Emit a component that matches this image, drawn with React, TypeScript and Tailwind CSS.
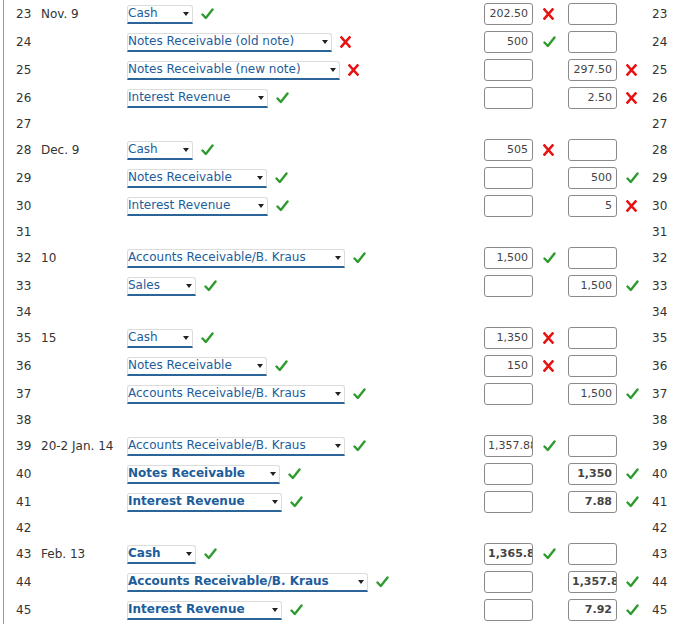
import React from "react";

type Mark = "ok" | "no" | null;

interface Row {
  n: number;
  date?: string;
  account?: string;
  w?: number;
  mark?: Mark;
  bold?: boolean;
  debit?: string;
  dm?: Mark;
  credit?: string;
  cm?: Mark;
  clip?: boolean;
}

const rows: Row[] = [
  { n: 23, date: "Nov. 9", account: "Cash", w: 66, mark: "ok", debit: "202.50", dm: "no" },
  { n: 24, account: "Notes Receivable (old note)", w: 205, mark: "no", debit: "500", dm: "ok" },
  { n: 25, account: "Notes Receivable (new note)", w: 213, mark: "no", credit: "297.50", cm: "no" },
  { n: 26, account: "Interest Revenue", w: 141, mark: "ok", credit: "2.50", cm: "no" },
  { n: 27 },
  { n: 28, date: "Dec. 9", account: "Cash", w: 66, mark: "ok", debit: "505", dm: "no" },
  { n: 29, account: "Notes Receivable", w: 140, mark: "ok", credit: "500", cm: "ok" },
  { n: 30, account: "Interest Revenue", w: 141, mark: "ok", credit: "5", cm: "no" },
  { n: 31 },
  { n: 32, date: "10", account: "Accounts Receivable/B. Kraus", w: 218, mark: "ok", debit: "1,500", dm: "ok" },
  { n: 33, account: "Sales", w: 69, mark: "ok", credit: "1,500", cm: "ok" },
  { n: 34 },
  { n: 35, date: "15", account: "Cash", w: 66, mark: "ok", debit: "1,350", dm: "no" },
  { n: 36, account: "Notes Receivable", w: 140, mark: "ok", debit: "150", dm: "no" },
  { n: 37, account: "Accounts Receivable/B. Kraus", w: 218, mark: "ok", credit: "1,500", cm: "ok" },
  { n: 38 },
  { n: 39, date: "20-2 Jan. 14", account: "Accounts Receivable/B. Kraus", w: 218, mark: "ok", debit: "1,357.88", dm: "ok", clip: true },
  { n: 40, account: "Notes Receivable", w: 153, mark: "ok", bold: true, credit: "1,350", cm: "ok" },
  { n: 41, account: "Interest Revenue", w: 155, mark: "ok", bold: true, credit: "7.88", cm: "ok" },
  { n: 42 },
  { n: 43, date: "Feb. 13", account: "Cash", w: 69, mark: "ok", bold: true, debit: "1,365.80", dm: "ok", clip: true },
  { n: 44, account: "Accounts Receivable/B. Kraus", w: 241, mark: "ok", bold: true, credit: "1,357.88", cm: "ok", clip: true },
  { n: 45, account: "Interest Revenue", w: 155, mark: "ok", bold: true, credit: "7.92", cm: "ok" },
];

const Check = () => (
  <svg width="13" height="12" viewBox="0 0 13 12">
    <path d="M1.5 6.5 L4.8 10 L11.5 1.5" fill="none" stroke="#2f9a2f" strokeWidth="2.4" strokeLinecap="round" strokeLinejoin="round" />
  </svg>
);

const Cross = () => (
  <svg width="11" height="12" viewBox="0 0 11 12">
    <path d="M1.5 1.5 L9.5 10.5 M9.5 1.5 L1.5 10.5" fill="none" stroke="#e81010" strokeWidth="2.6" strokeLinecap="square" />
  </svg>
);

const MarkIcon = ({ m }: { m?: Mark }) =>
  m === "ok" ? <Check /> : m === "no" ? <Cross /> : null;

const Box = ({ value, bold, clip }: { value?: string; bold?: boolean; clip?: boolean }) => (
  <div
    className={`w-[49px] h-[22px] border border-[#8a8a8a] rounded-[3px] bg-white overflow-hidden whitespace-nowrap text-[11px] leading-[20px] text-[#444] px-[4px] ${
      clip ? "text-left pl-[3px]" : "text-right"
    } ${bold ? "font-bold text-[#222]" : ""}`}
  >
    {value ?? ""}
  </div>
);

const Select = ({ label, w, bold }: { label: string; w: number; bold?: boolean }) => (
  <div
    style={{ width: w }}
    className={`relative h-[19px] border border-[#dcdcdc] border-b-2 border-b-[#2a6498] rounded-t-[3px] text-[#1d5d9b] text-[12px] leading-[15px] whitespace-nowrap ${
      bold ? "font-bold" : ""
    }`}
  >
    <span className="pl-[0px]">{label}</span>
    <span className="absolute right-[3px] top-[6px] w-0 h-0 border-l-[3px] border-r-[3px] border-t-[4px] border-l-transparent border-r-transparent border-t-[#222]" />
  </div>
);

export default function App() {
  return (
    <div className="w-[683px] h-[624px] bg-white overflow-hidden font-['Verdana','DejaVu_Sans',sans-serif] text-[12px] text-[#333]">
      <div className="ml-[3px] border-l border-[#9a9a9a] h-full">
        {rows.map((r) => {
          const blank = !r.account;
          return (
            <div key={r.n} className={`flex items-center ${blank ? "h-[24px]" : "h-[28px]"}`}>
              <div className="w-[37px] pl-[12px] shrink-0">{r.n}</div>
              <div className="w-[86px] shrink-0 whitespace-nowrap">{r.date ?? ""}</div>
              <div className="w-[357px] shrink-0 flex items-center gap-[8px]">
                {r.account && <Select label={r.account} w={r.w ?? 100} bold={r.bold} />}
                <MarkIcon m={r.mark} />
              </div>
              <div className="w-[49px] shrink-0">
                {!blank && <Box value={r.debit} bold={r.bold} clip={r.clip && !!r.debit} />}
              </div>
              <div className="w-[35px] shrink-0 pl-[10px] flex items-center">
                <MarkIcon m={r.dm} />
              </div>
              <div className="w-[49px] shrink-0">
                {!blank && <Box value={r.credit} bold={r.bold} clip={r.clip && !!r.credit} />}
              </div>
              <div className="w-[35px] shrink-0 pl-[9px] flex items-center">
                <MarkIcon m={r.cm} />
              </div>
              <div className="shrink-0">{r.n}</div>
            </div>
          );
        })}
      </div>
    </div>
  );
}
